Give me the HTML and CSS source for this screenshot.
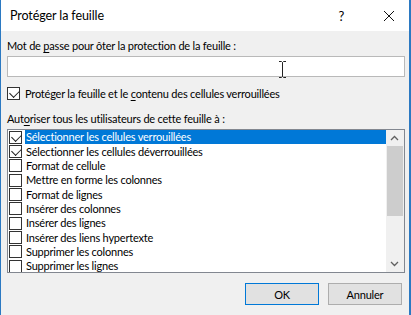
FILE: index.html
```
<!doctype html>
<html lang="fr">
<head>
    <meta charset="UTF-8">
    <title>Protéger la feuille</title>
    <link rel="stylesheet" href="styles.css">
</head>
<body>
<div class="dialog">
    <div class="titlebar">
        <span class="titlebar_text">Protéger la feuille</span>
        <span class="titlebar_help">?</span>
        <svg class="titlebar_close" width="12" height="12" viewBox="0 0 12 12">
            <path d="M1,1L11,11M11,1L1,11"/>
        </svg>
    </div>
    <div class="content">
        <div class="label">Mot de <u>p</u>asse pour ôter la protection de la feuille :</div>
        <div class="password">
            <svg class="ibeam" width="7" height="17" viewBox="0 0 7 17">
                <path d="M0,0.5H2.5L3.5,1.5L4.5,0.5H7M3.5,1.5V15.5M0,16.5H2.5L3.5,15.5L4.5,16.5H7"/>
            </svg>
        </div>
        <div class="check_row">
            <span class="box checked"></span>
            <span>Protéger la feuille et le <u>c</u>ontenu des cellules verrouillées</span>
        </div>
        <div class="label label_list">Aut<u>o</u>riser tous les utilisateurs de cette feuille à :</div>
        <div class="list">
            <div class="list_items">
                <div class="item selected"><span class="box checked"></span><span class="item_text">Sélectionner les cellules verrouillées</span></div>
                <div class="item"><span class="box checked"></span><span class="item_text">Sélectionner les cellules déverrouillées</span></div>
                <div class="item"><span class="box"></span><span class="item_text">Format de cellule</span></div>
                <div class="item"><span class="box"></span><span class="item_text">Mettre en forme les colonnes</span></div>
                <div class="item"><span class="box"></span><span class="item_text">Format de lignes</span></div>
                <div class="item"><span class="box"></span><span class="item_text">Insérer des colonnes</span></div>
                <div class="item"><span class="box"></span><span class="item_text">Insérer des lignes</span></div>
                <div class="item"><span class="box"></span><span class="item_text">Insérer des liens hypertexte</span></div>
                <div class="item"><span class="box"></span><span class="item_text">Supprimer les colonnes</span></div>
                <div class="item"><span class="box"></span><span class="item_text">Supprimer les lignes</span></div>
            </div>
            <div class="scrollbar">
                <svg class="arrow" width="17" height="16" viewBox="0 0 17 16">
                    <path d="M5,10L8.5,6.5L12,10"/>
                </svg>
                <div class="scroll_track">
                    <div class="scroll_thumb"></div>
                </div>
                <svg class="arrow" width="17" height="16" viewBox="0 0 17 16">
                    <path d="M5,6L8.5,9.5L12,6"/>
                </svg>
            </div>
        </div>
        <div class="buttons">
            <div class="button default">OK</div>
            <div class="button">Annuler</div>
        </div>
    </div>
</div>
</body>
</html>
```
FILE: styles.css
```
* {
    box-sizing: border-box;
    margin: 0;
    padding: 0;
}

body {
    width: 411px;
    height: 315px;
    overflow: hidden;
    background-color: #f0f0f0;
    font-family: Lato, "Noto Sans", sans-serif;
    font-size: 11px;
    letter-spacing: -0.2px;
    color: #000;
}

u {
    text-decoration-thickness: 1px;
    text-underline-offset: 2px;
}

.dialog {
    display: flex;
    flex-direction: column;
    width: 411px;
    height: 315px;
    border-left: 1px solid #2b79c2;
    border-right: 2px solid #2b79c2;
    background-color: #f0f0f0;
}

.titlebar {
    display: flex;
    align-items: center;
    height: 31px;
    flex-shrink: 0;
    background-color: #fff;
    padding-left: 9px;
}

.titlebar_text {
    flex: 1;
    font-size: 12.5px;
    letter-spacing: -0.1px;
}

.titlebar_help {
    font-size: 13px;
    margin-right: 39px;
}

.titlebar_close {
    margin-right: 14px;
    stroke: #111;
    stroke-width: 1;
    fill: none;
}

.content {
    display: flex;
    flex-direction: column;
    padding: 7px 4px 0 6px;
}

.label {
    height: 18px;
    line-height: 16px;
}

.password {
    display: flex;
    align-items: center;
    height: 21px;
    border: 1px solid #b9b9b9;
    background-color: #fff;
    padding-left: 271px;
}

.ibeam {
    margin-top: 6px;
    stroke: #222;
    stroke-width: 1;
    fill: none;
}

.check_row {
    display: flex;
    align-items: center;
    gap: 5px;
    height: 18px;
    margin-top: 7px;
}

.box {
    display: block;
    position: relative;
    width: 13px;
    height: 13px;
    flex-shrink: 0;
    border: 1px solid #333;
    background-color: #fff;
}

.checked::after {
    content: "";
    position: absolute;
    left: 3px;
    top: 0;
    width: 6px;
    height: 8px;
    border-right: 1px solid #222;
    border-bottom: 1px solid #222;
    transform: rotate(45deg) scaleX(0.9);
    transform-origin: center;
}

.label_list {
    margin-top: 9px;
    height: 17px;
}

.list {
    display: flex;
    height: 144px;
    margin-top: 1px;
    border: 1px solid #828790;
    background-color: #fff;
    overflow: hidden;
}

.list_items {
    flex: 1;
    padding-left: 1px;
}

.item {
    display: flex;
    align-items: center;
    gap: 3px;
    height: 14.35px;
}

.item_text {
    flex: 1;
    line-height: 14px;
    padding-left: 1px;
    white-space: nowrap;
}

.selected .item_text {
    background-color: #0078d7;
    color: #fff;
}

.scrollbar {
    display: flex;
    flex-direction: column;
    width: 18px;
    background-color: #f0f0f0;
}

.arrow {
    flex-shrink: 0;
    stroke: #606060;
    stroke-width: 1.3;
    fill: none;
}

.scroll_track {
    flex: 1;
    padding: 0 1px;
}

.scroll_thumb {
    height: 70px;
    background-color: #cdcdcd;
}

.buttons {
    display: flex;
    justify-content: flex-end;
    gap: 9px;
    margin-top: 10px;
    padding-right: 3px;
}

.button {
    display: flex;
    justify-content: center;
    align-items: center;
    width: 74px;
    height: 22px;
    border: 1px solid #adadad;
    background-color: #e1e1e1;
}

.default {
    border: 1px solid #0078d7;
}
```
